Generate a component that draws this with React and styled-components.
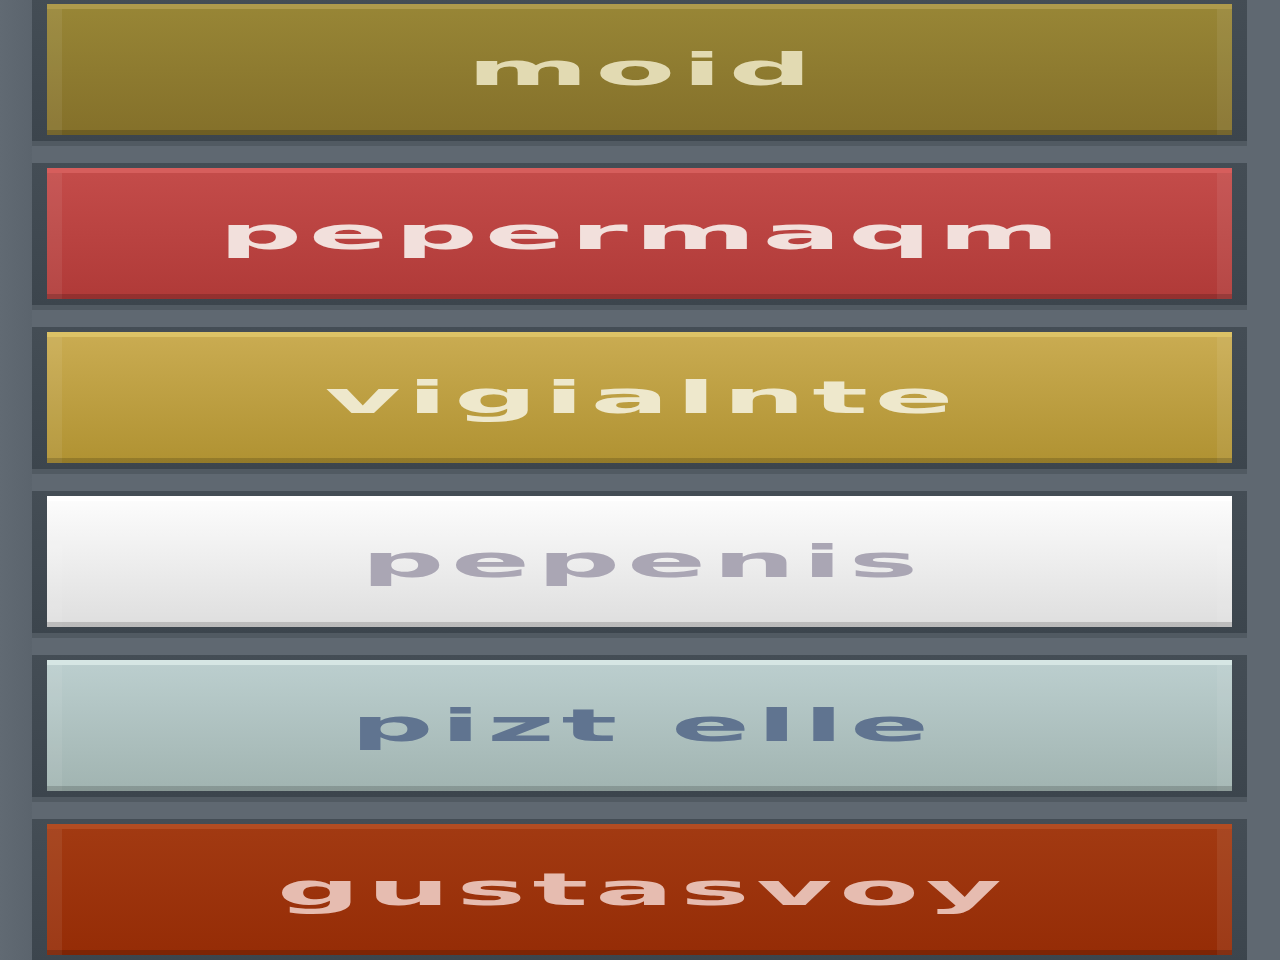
import * as React from 'react'
import styled, { createGlobalStyle } from 'styled-components'

const GlobalStyle = createGlobalStyle`
  html, body {
    margin: 0;
    padding: 0;
    background: #5f6871;
    overflow: hidden;
  }
`

const Page = styled.div`
  width: 1280px;
  height: 960px;
  padding: 0 33px 0 32px;
  box-sizing: border-box;
  display: flex;
  flex-direction: column;
  gap: 22px;
  background: linear-gradient(90deg, #616a73 0, #5b646d 32px, #5f6871 32px);
`

const Frame = styled.div`
  flex: none;
  padding: 5px 15px 6px;
  background: linear-gradient(180deg, #444d55, #3c454d);
  box-shadow: 0 5px 0 rgba(40, 48, 56, 0.25);
  &:first-child {
    margin-top: -1px;
  }
`

const Bar = styled.div`
  height: 131px;
  display: flex;
  align-items: center;
  justify-content: center;
  box-sizing: border-box;
  background: linear-gradient(180deg, ${p => p.$top}, ${p => p.$bottom});
  box-shadow:
    inset 0 5px 0 ${p => p.$hi},
    inset 0 -5px 0 rgba(0, 0, 0, 0.16),
    inset 15px 0 0 rgba(255, 255, 255, 0.07),
    inset -15px 0 0 rgba(255, 255, 255, 0.07);
  overflow: hidden;
`

const Label = styled.span`
  display: inline-block;
  padding-left: 2.5px;
  font-family: 'DejaVu Sans', 'Verdana', sans-serif;
  font-weight: bold;
  font-size: 44px;
  letter-spacing: 2.5px;
  line-height: 1;
  white-space: pre;
  color: ${p => p.$color};
  transform: scaleX(2.65);
  transform-origin: center;
`

const items = [
  { text: 'moid', top: '#988636', bottom: '#84702a', hi: '#ae9a4c', color: '#e2dab2' },
  { text: 'pepermaqm', top: '#c44c4a', bottom: '#b03a38', hi: '#d65e5c', color: '#f2e0dc' },
  { text: 'vigialnte', top: '#caac52', bottom: '#b09232', hi: '#dcc266', color: '#eee8cc' },
  { text: 'pepenis', top: '#fdfdfd', bottom: '#dedede', hi: '#ffffff', color: '#aaa6b4' },
  { text: 'pizt elle', top: '#bccfcf', bottom: '#a1b4b1', hi: '#d6e6e4', color: '#607490' },
  { text: 'gustasvoy', top: '#a23a12', bottom: '#952c06', hi: '#b24c22', color: '#e6bcb0' },
]

function App() {
  return (
    <>
      <GlobalStyle />
      <Page>
        {items.map(item => (
          <Frame key={item.text}>
            <Bar $top={item.top} $bottom={item.bottom} $hi={item.hi}>
              <Label $color={item.color}>{item.text}</Label>
            </Bar>
          </Frame>
        ))}
      </Page>
    </>
  )
}

export default App
